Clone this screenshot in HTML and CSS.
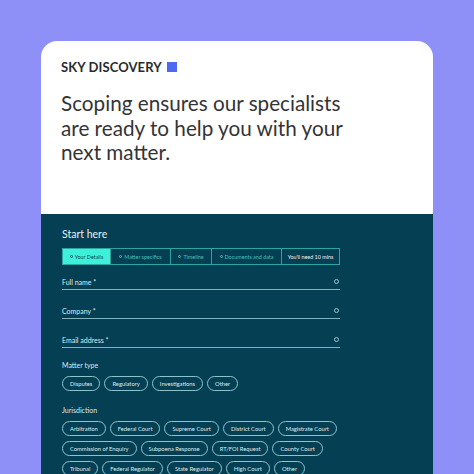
FILE: index.html
```html
<!DOCTYPE html>
<html>
<head>
<meta charset="utf-8">
<link rel="stylesheet" href="styles.css">
</head>
<body>
<div class="card">
  <div class="top">
    <div class="brand">SKY DISCOVERY <span class="sq"></span></div>
    <h1 class="lead">Scoping ensures our specialists are ready to help you with your next matter.</h1>
  </div>
  <div class="dark">
    <div class="form">
      <div class="start">Start here</div>
      <div class="tabs">
        <div class="tab active"><span class="dot"></span>Your Details</div>
        <div class="tab"><span class="dot"></span>Matter specifics</div>
        <div class="tab"><span class="dot"></span>Timeline</div>
        <div class="tab"><span class="dot"></span>Documents and data</div>
        <div class="tab last">You'll need 10 mins</div>
      </div>
      <div class="field first"><span>Full name *</span><span class="ficon"></span></div>
      <div class="field"><span>Company *</span><span class="ficon"></span></div>
      <div class="field"><span>Email address *</span><span class="ficon"></span></div>
      <div class="group-label">Matter type</div>
      <div class="chips">
        <span class="chip">Disputes</span>
        <span class="chip">Regulatory</span>
        <span class="chip">Investigations</span>
        <span class="chip">Other</span>
      </div>
      <div class="group-label second">Jurisdiction</div>
      <div class="chips">
        <span class="chip">Arbitration</span>
        <span class="chip">Federal Court</span>
        <span class="chip">Supreme Court</span>
        <span class="chip">District Court</span>
        <span class="chip">Magistrate Court</span>
        <span class="chip">Commission of Enquiry</span>
        <span class="chip">Subpoena Response</span>
        <span class="chip">RT/FOI Request</span>
        <span class="chip">County Court</span>
        <span class="chip">Tribunal</span>
        <span class="chip">Federal Regulator</span>
        <span class="chip">State Regulator</span>
        <span class="chip">High Court</span>
        <span class="chip">Other</span>
      </div>
    </div>
  </div>
</div>
</body>
</html>
```
FILE: styles.css
```css
* { box-sizing: border-box; }
html, body { margin: 0; padding: 0; }
body {
  background: #8f90f7;
  font-family: Lato, "Open Sans", sans-serif;
  width: 474px;
  height: 474px;
  overflow: hidden;
}
.card {
  margin: 41px 0 0 41px;
  width: 392px;
  border-radius: 16px 16px 0 0;
  overflow: hidden;
  background: #fff;
}
.top {
  height: 173px;
  padding: 18px 20px 0 20px;
}
.brand {
  font-size: 13px;
  font-weight: 700;
  color: #2b2b2d;
  letter-spacing: 0.1px;
  display: flex;
  align-items: center;
  gap: 5px;
  line-height: 16px;
}
.sq {
  display: inline-block;
  width: 10px;
  height: 10px;
  background: #4e69f1;
}
.lead {
  margin: 16px 0 0 0;
  font-size: 20.7px;
  font-weight: 400;
  line-height: 24.5px;
  color: #343436;
  width: 310px;
}
.dark {
  background: #053f54;
  height: 260px;
  padding: 13px 21px 0 21px;
}
.form { width: 278px; }
.start {
  color: #e6f2f2;
  font-size: 10.5px;
  line-height: 14px;
}
.tabs {
  display: flex;
  margin-top: 7px;
  border: 1px solid #2aa59f;
  height: 17px;
}
.tab {
  display: flex;
  align-items: center;
  justify-content: center;
  gap: 2px;
  font-size: 5.4px;
  color: #4bbfb5;
  border-right: 1px solid #2aa59f;
  white-space: nowrap;
}
.tab:nth-child(1) { width: 48px; }
.tab:nth-child(2) { width: 60px; }
.tab:nth-child(3) { width: 41px; }
.tab:nth-child(4) { width: 70px; }
.tab.last { flex: 1; border-right: none; color: #e8f4f4; }
.tab.active { background: #3ff0d9; color: #0b4a55; }
.dot {
  width: 3px;
  height: 3px;
  border-radius: 50%;
  border: 0.6px solid currentColor;
  display: inline-block;
}
.field {
  display: flex;
  justify-content: space-between;
  align-items: center;
  color: #d9ecee;
  font-size: 7px;
  height: 25px;
  padding-top: 9px;
  border-bottom: 1.2px solid #7fb4bf;
  margin-top: 4px;
}
.field.first { margin-top: 0; }
.ficon {
  width: 5px;
  height: 5px;
  border-radius: 50%;
  border: 1px solid #9fc3c9;
  margin-right: 1px;
}
.group-label {
  color: #d9ecee;
  font-size: 7px;
  margin-top: 13px;
  line-height: 9px;
}
.group-label.second { margin-top: 15px; }
.chips {
  display: flex;
  flex-wrap: wrap;
  gap: 5px 4px;
  margin-top: 6px;
}
.chip {
  height: 15px;
  border: 1px solid #8cc4cc;
  border-radius: 8px;
  color: #dcecef;
  font-size: 5.8px;
  display: inline-flex;
  align-items: center;
  padding: 0 7px;
  white-space: nowrap;
}
```
